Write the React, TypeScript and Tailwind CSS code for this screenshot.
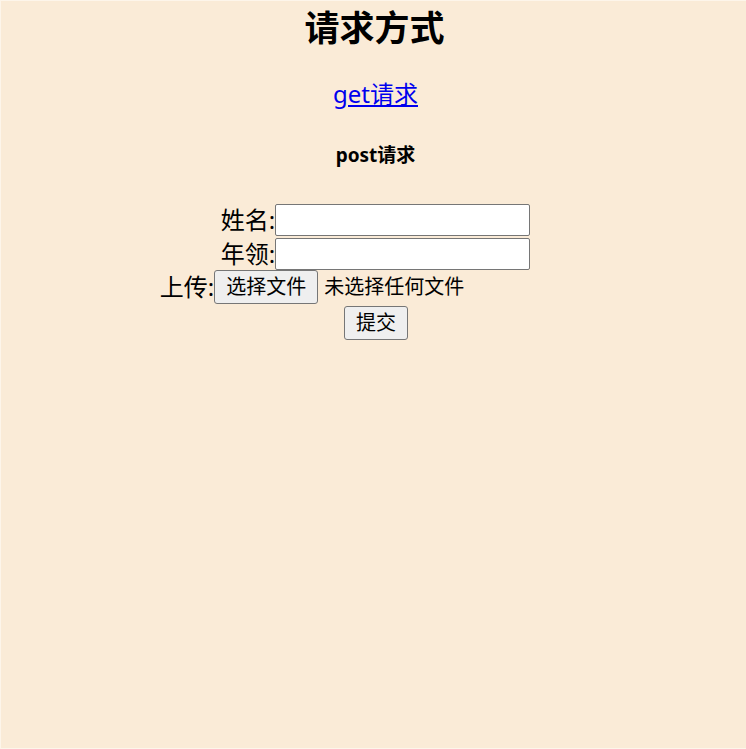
import React from "react";

const font = { fontFamily: '"Noto Sans", "Noto Sans CJK SC", sans-serif' };

export default function App() {
  return (
    <div
      className="min-h-[749px] bg-[#faebd7] border-l border-t border-b border-[#fdf5ea] text-black"
      style={font}
    >
      <div className="flex flex-col items-center">
        <h1 className="mt-[3px] text-[35px] font-bold leading-[48px] pl-[2px]">请求方式</h1>
        <a href="#" className="mt-[25px] pl-[4px] text-[24px] leading-[34px] text-[#0000ee] underline">
          get请求
        </a>
        <h3 className="mt-[31px] pl-[4px] text-[19px] font-bold leading-[26px]">post请求</h3>
        <form className="mt-[35px] flex flex-col items-center">
          <div className="flex items-center pl-[4px] h-[34px]">
            <label className="text-[24px] leading-[32px]">姓名:</label>
            <input
              type="text"
              className="w-[255px] h-[32px] bg-white border border-[#767676] rounded-[2px] outline-none"
            />
          </div>
          <div className="flex items-center pl-[4px] h-[34px]">
            <label className="text-[24px] leading-[32px]">年领:</label>
            <input
              type="text"
              className="w-[255px] h-[32px] bg-white border border-[#767676] rounded-[2px] outline-none"
            />
          </div>
          <div className="flex items-center h-[34px] -mt-[1px]">
            <label className="text-[24px] leading-[32px]">上传:</label>
            <div className="w-[373px] flex items-center">
              <button
                type="button"
                className="w-[104px] h-[34px] bg-[#efefef] border border-[#767676] rounded-[3px] text-[20px] leading-[28px]"
              >
                选择文件
              </button>
              <span className="ml-[6px] text-[20px] leading-[28px]">未选择任何文件</span>
            </div>
          </div>
          <button
            type="button"
            className="mt-[2px] ml-[5px] w-[64px] h-[34px] bg-[#efefef] border border-[#767676] rounded-[3px] text-[20px] leading-[28px]"
          >
            提交
          </button>
        </form>
      </div>
    </div>
  );
}
